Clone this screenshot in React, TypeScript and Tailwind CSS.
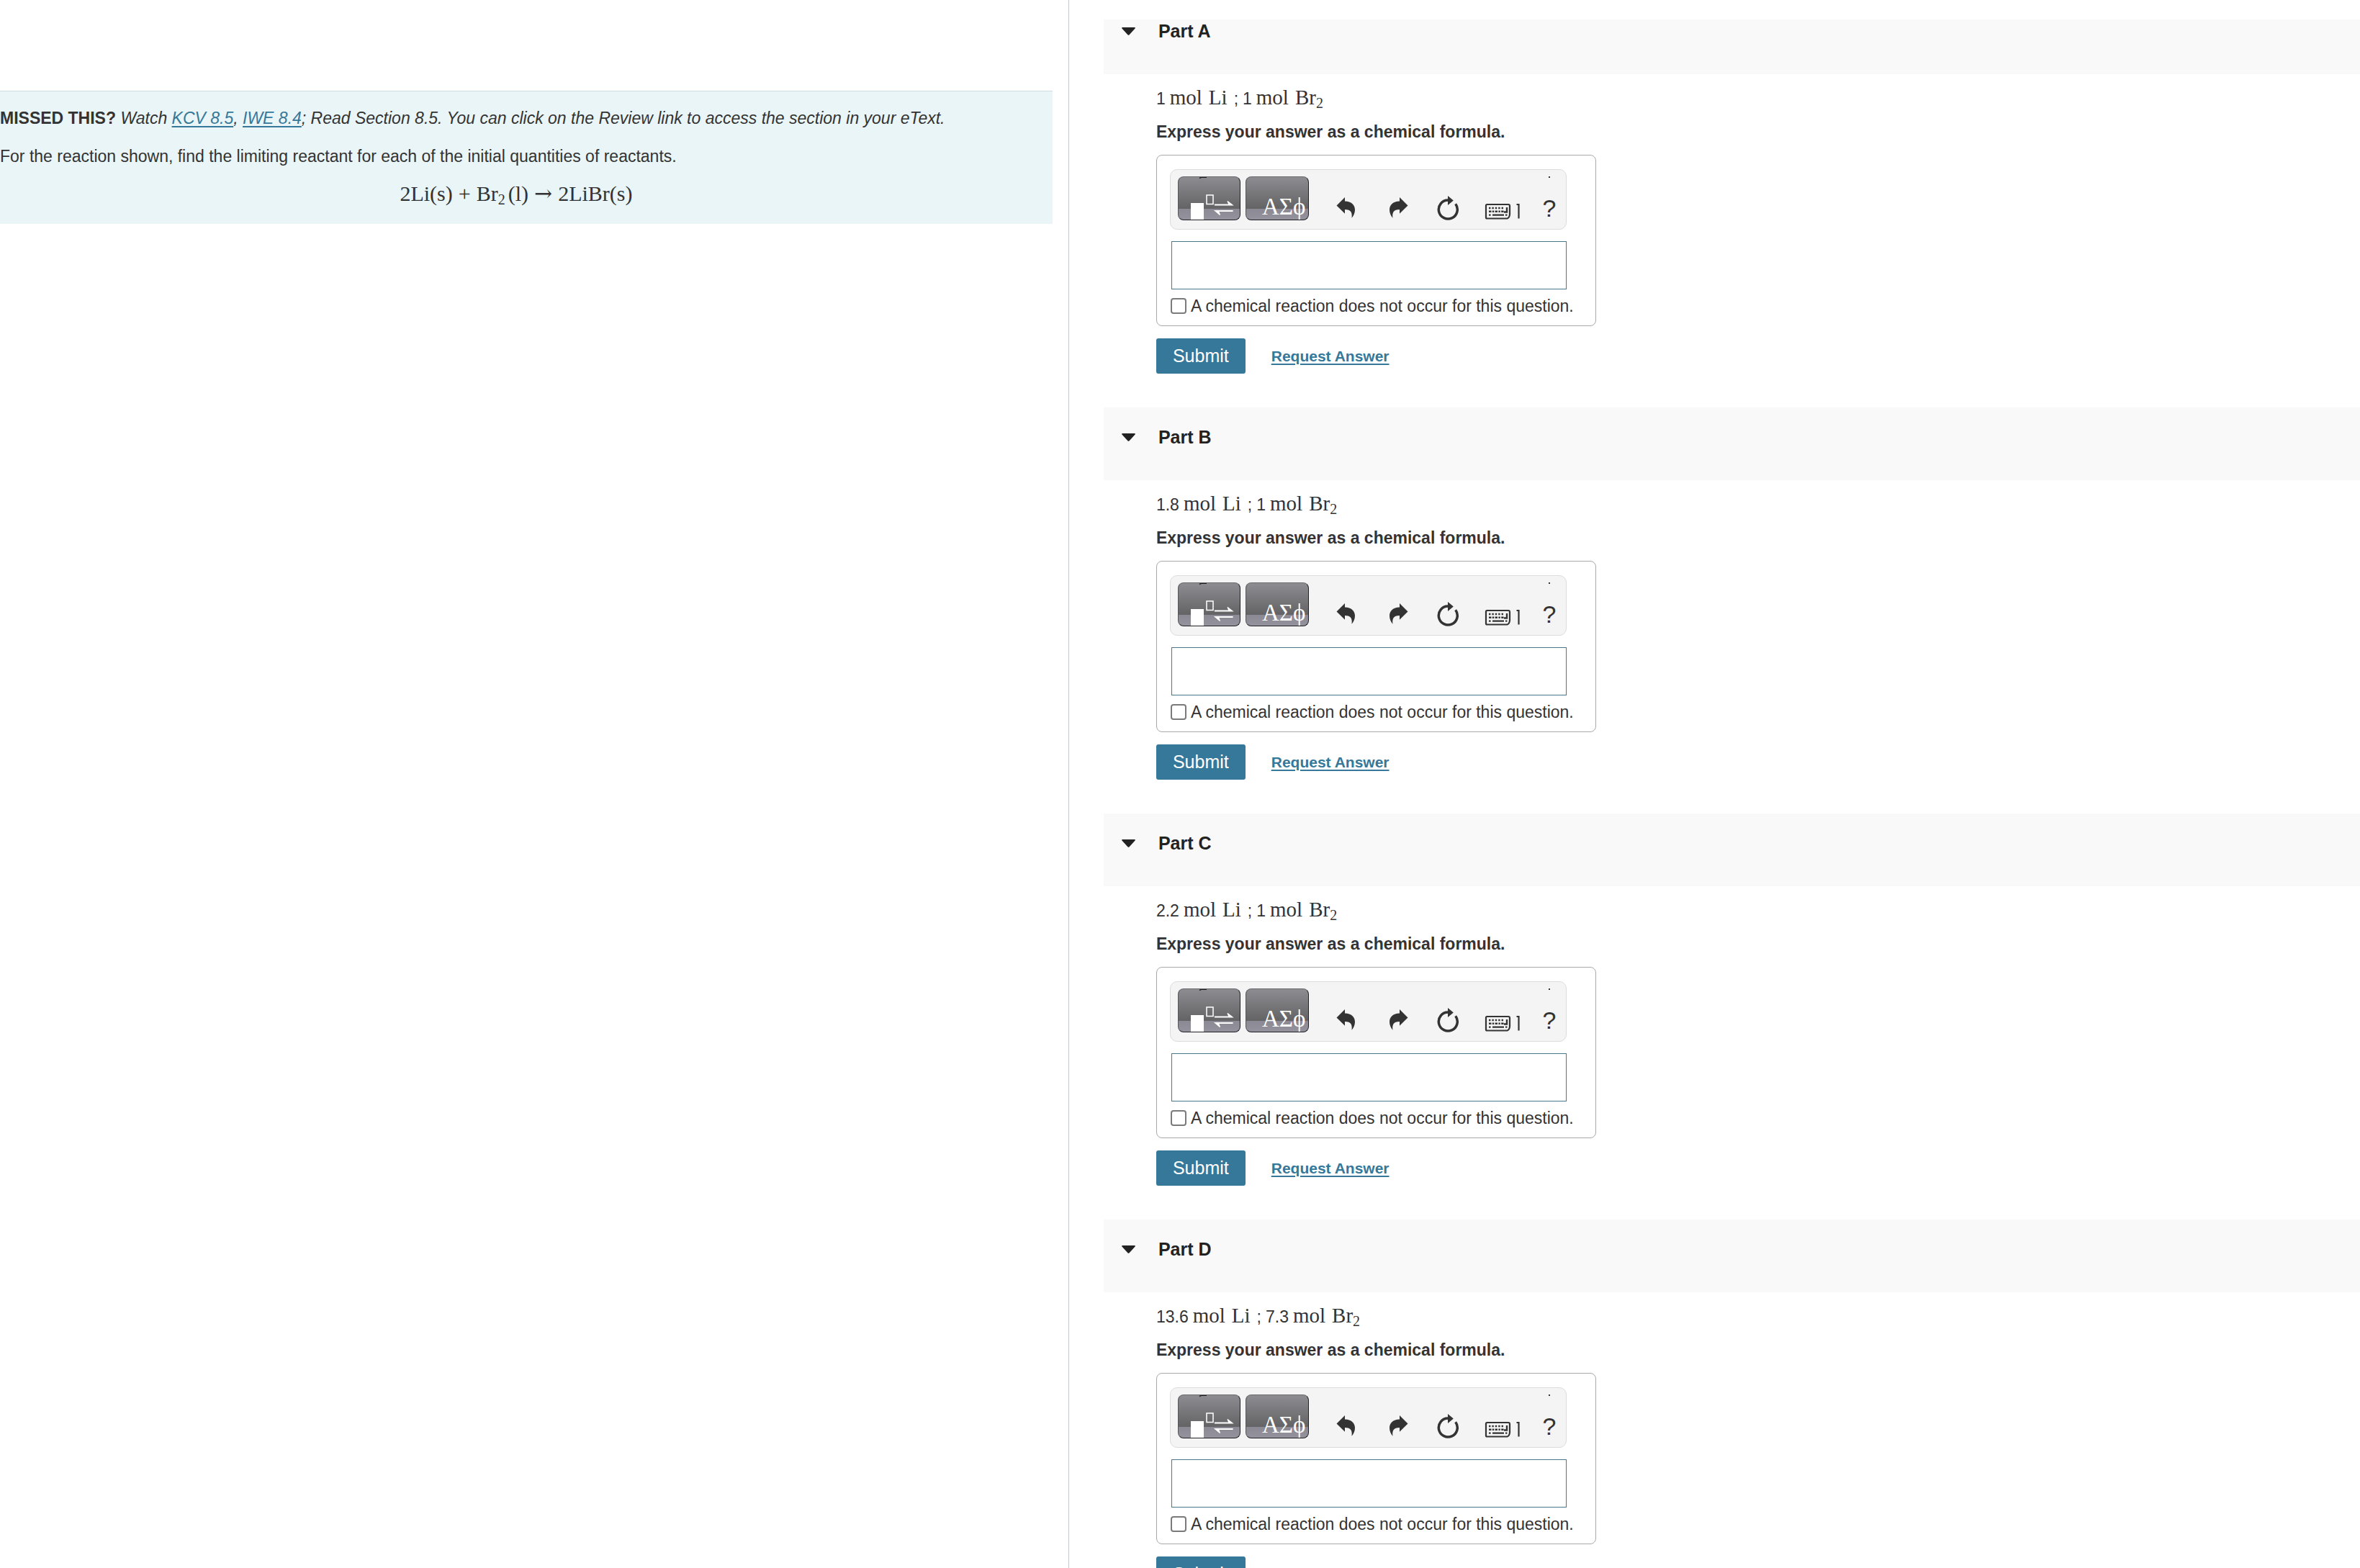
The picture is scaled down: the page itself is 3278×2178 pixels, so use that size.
import React from 'react';

type Part = { name: string; lithium: string; bromine: string };

const parts: Part[] = [
  { name: 'Part A', lithium: '1', bromine: '1' },
  { name: 'Part B', lithium: '1.8', bromine: '1' },
  { name: 'Part C', lithium: '2.2', bromine: '1' },
  { name: 'Part D', lithium: '13.6', bromine: '7.3' },
];

const paletteButton =
  'h-[61px] shrink-0 overflow-hidden rounded-lg border border-t-[#6a6a6e] border-l-[#55555a] border-r-[#222226] border-b-[#222226] bg-[linear-gradient(to_bottom,#8d8c91_0%,#636365_75%,#8b8a94_75%,#94939d_100%)] text-white';

function TemplatesIcon() {
  return (
    <svg width="85" height="59" viewBox="1 1 85 59" fill="none" className="block">
      <path d="M30 2.5 L33 1.2 H40" stroke="#1c1c1e" strokeWidth="1.4" />
      <rect x="18" y="37" width="18" height="24" fill="#fff" />
      <rect x="40" y="26" width="9" height="12.5" stroke="#fff" strokeWidth="1.5" />
      <path d="M51.5 40 H76 L69 34.5 L71 39 H51.5 Z M76 47.5 H51.5 L58.5 53.5 L56.5 48.5 H76 Z" fill="#fff" stroke="#fff" strokeWidth="1.2" />
    </svg>
  );
}

function UndoIcon() {
  return (
    <svg width="40" height="61" viewBox="0 0 40 61" fill="#333">
      <path d="M6.5 40.5 L18 29 V34.5 C27 34.5 32 39.5 32 46.5 C32 51 30 55 27.5 57.8 C28.5 50 26.5 46 18 46 V51.8 Z" />
    </svg>
  );
}

function RedoIcon() {
  return (
    <svg width="40" height="61" viewBox="0 0 40 61" fill="#333">
      <path d="M33.5 40.5 L22 29 V34.5 C13 34.5 8 39.5 8 46.5 C8 51 10 55 12.5 57.8 C11.5 50 13.5 46 22 46 V51.8 Z" />
    </svg>
  );
}

function ResetIcon() {
  return (
    <svg width="40" height="61" viewBox="0 0 40 61" fill="none">
      <path d="M20.3 33 A13 13 0 1 0 30.7 38.2" stroke="#333" strokeWidth="3.5" />
      <path d="M20 27 L27.8 33.5 L20 40 Z" fill="#333" />
    </svg>
  );
}

function KeyboardIcon() {
  return (
    <svg width="52" height="61" viewBox="0 0 52 61" fill="none" stroke="#333">
      <path d="M4.5 39 H34 Q36 39 36 41 V53 Q35.5 57.5 32.5 58.5 H4.5 Q3 58.5 3 57 V40.5 Q3 39 4.5 39 Z" strokeWidth="2.2" />
      <path d="M7 44 H29" strokeWidth="2.4" strokeDasharray="2.4 2" />
      <path d="M7 48.8 H29" strokeWidth="2.4" strokeDasharray="3.4 1.4 2.4 1.4" />
      <path d="M32 43 V49.5 H28" strokeWidth="2.4" />
      <path d="M7 53.6 H9.6 M12 53.6 H28 M30 53.6 H32.4" strokeWidth="2.4" />
      <path d="M45.5 39 H48.5 V58.5" strokeWidth="2.2" />
    </svg>
  );
}

function Toolbar() {
  return (
    <div className="flex items-start rounded-[10px] border border-[#dcdcdc] bg-[#f4f4f4] px-[10px] pt-[9px] pb-[12px]">
      <button type="button" aria-label="Templates" className={`w-[87px] ${paletteButton}`}>
        <TemplatesIcon />
      </button>
      <button type="button" aria-label="Symbols" className={`ml-[7px] w-[88px] pt-6 pl-[22px] text-left ${paletteButton}`}>
        <span className="block font-['Liberation_Serif',serif] text-[33px] leading-[33px] whitespace-nowrap">ΑΣϕ</span>
      </button>
      <button type="button" aria-label="Undo" className="ml-8">
        <UndoIcon />
      </button>
      <button type="button" aria-label="Redo" className="ml-8">
        <RedoIcon />
      </button>
      <button type="button" aria-label="Reset" className="ml-[29px]">
        <ResetIcon />
      </button>
      <button type="button" aria-label="Keyboard shortcuts" className="ml-[30px]">
        <KeyboardIcon />
      </button>
      <button type="button" aria-label="Help" className="ml-[27px] flex h-[61px] w-6 flex-col items-center justify-between text-[#333]">
        <span className="size-[2px] bg-[#333]" />
        <span className="text-[34px] leading-[34px]">?</span>
      </button>
    </div>
  );
}

function Moles({ quantity, children }: { quantity: string; children: React.ReactNode }) {
  return (
    <>
      <span className="mr-[6px] font-['Liberation_Sans',sans-serif] text-[23px] leading-none">{quantity}</span>
      mol<span className="ml-[9px]">{children}</span>
    </>
  );
}

function PartSection({ part, first }: { part: Part; first: boolean }) {
  const id = part.name.replace(' ', '-').toLowerCase();
  return (
    <section>
      <h2 className={`bg-[#f9f9f9] pb-11 pl-[25px] ${first ? '' : 'pt-[25px]'}`}>
        <button type="button" className="flex items-center gap-8 text-[25px] leading-8 font-bold text-[#222]">
          <svg width="19" height="11" viewBox="0 0 19 11" fill="#222">
            <path d="M1 0 H18 Q19.5 0.3 18.4 1.7 L10.4 10.4 Q9.5 11.2 8.6 10.4 L0.6 1.7 Q-0.5 0.3 1 0 Z" />
          </svg>
          {part.name}
        </button>
      </h2>
      <div className="flex flex-col items-start pt-3 pb-[47px] pl-[73px]">
        <p className="font-['Liberation_Serif',serif] text-[29px] leading-10">
          <Moles quantity={part.lithium}>Li</Moles>
          <span className="mr-[6px] ml-[9px] font-['Liberation_Sans',sans-serif] text-[23px] leading-none">;</span>
          <Moles quantity={part.bromine}>
            Br<sub className="text-[20px]">2</sub>
          </Moles>
        </p>
        <p className="mt-3 leading-8 font-bold">Express your answer as a chemical formula.</p>
        <div className="mt-4 rounded-lg border border-[#a8a8a8] pt-[19px] pr-10 pb-[11px] pl-[18px]">
          <Toolbar />
          <input type="text" aria-label={`${part.name} answer`} className="mt-4 ml-[2px] block h-[67px] w-[549px] border border-[#47788a] bg-white px-3" />
          <label htmlFor={`${id}-none`} className="mt-[7px] -mr-8 ml-px flex items-center gap-[6px] leading-8">
            <input id={`${id}-none`} type="checkbox" className="size-[22px] shrink-0 appearance-none rounded-[4px] border-2 border-[#7b7b7b] bg-white" />
            A chemical reaction does not occur for this question.
          </label>
        </div>
        <div className="mt-[17px] flex items-center gap-9">
          <button type="submit" className="h-[49px] rounded-[3px] bg-[#367899] px-[23px] text-[25px] text-white">
            Submit
          </button>
          <a href="#" className="text-[21px] leading-8 font-bold text-[#367899] underline decoration-2 underline-offset-3">
            Request Answer
          </a>
        </div>
      </div>
    </section>
  );
}

export default function App() {
  return (
    <main className="grid h-screen grid-cols-[45.3%_1fr] overflow-hidden bg-white font-['Liberation_Sans',sans-serif] text-[23px] text-[#333]">
      <div className="overflow-hidden border-r border-[#bfcad0] pt-[126px] pr-[22px]">
        <div className="border-t border-[#cfdde1] bg-[#eaf5f8] pt-[21px] pb-[22px]">
          <p className="leading-8 whitespace-nowrap">
            <strong>MISSED THIS?</strong>{' '}
            <em>
              Watch{' '}
              <a href="#" className="text-[#367899] underline decoration-2 underline-offset-3">KCV 8.5</a>,{' '}
              <a href="#" className="text-[#367899] underline decoration-2 underline-offset-3">IWE 8.4</a>; Read Section 8.5. You can click on the Review
              link to access the section in your eText.
            </em>
          </p>
          <p className="mt-[21px] leading-8">
            For the reaction shown, find the limiting reactant for each of the initial quantities of reactants.
          </p>
          <p className="mt-4 pr-7 text-center font-['Liberation_Serif',serif] text-[30px] leading-10">
            2Li(s)<span className="mx-2">+</span>Br<sub className="mr-1 text-[20px]">2</sub>(l)
            <span className="mx-2 font-['DejaVu_Serif',serif] leading-none">→</span>2LiBr(s)
          </p>
        </div>
      </div>
      <div className="overflow-hidden pt-[27px] pl-12">
        {parts.map((part, i) => (
          <PartSection key={part.name} part={part} first={i === 0} />
        ))}
      </div>
    </main>
  );
}
